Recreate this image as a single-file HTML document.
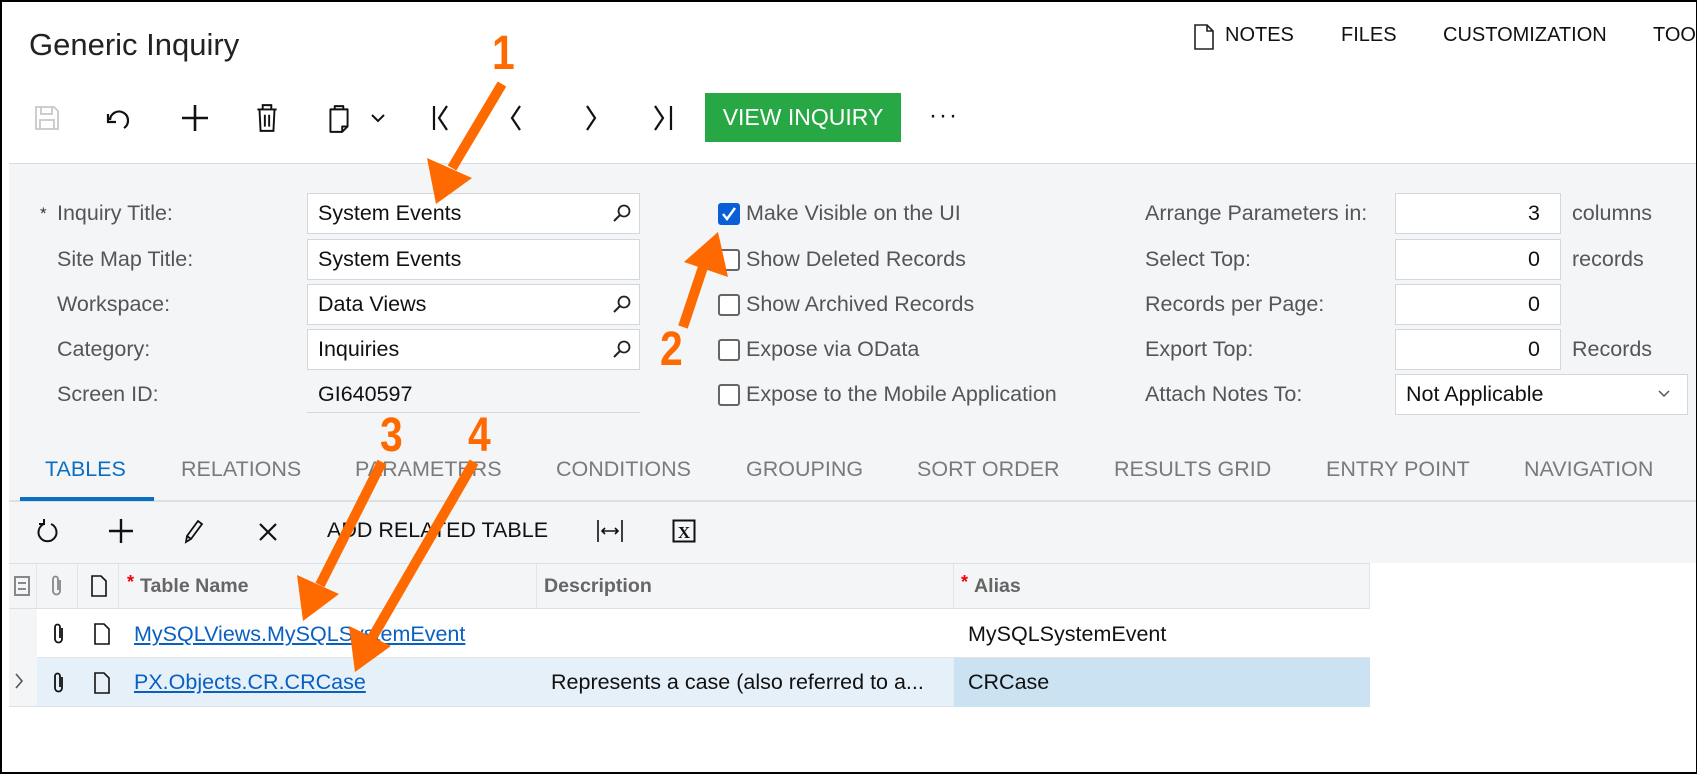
<!DOCTYPE html>
<html><head><meta charset="utf-8"><style>
*{margin:0;padding:0;box-sizing:border-box}
body{width:1697px;height:774px;position:relative;overflow:hidden;background:#fff;font-family:"Liberation Sans",Arial,sans-serif;color:#222}
.a{position:absolute;white-space:nowrap}
.frame{position:absolute;left:0;top:0;width:1697px;height:774px;border:2px solid #000;border-right-width:1px;z-index:50;pointer-events:none}
.lbl{font-size:21.5px;color:#555}
.inp{position:absolute;background:#fff;border:1px solid #d3d6da;height:41px;font-size:21.5px;color:#111;padding:0 10px;line-height:39px}
.num{text-align:right;padding-right:20px}
.tab{font-size:21.5px;color:#7a7a7a;top:457px}
.cb{position:absolute;left:718px;width:22px;height:22px;border:2px solid #666;border-radius:3px;background:#fff}
.cbt{left:746px;font-size:21.5px;color:#555}
.tm{font-size:20px;color:#111;top:24px}
svg{position:absolute}
.hd{font-size:19.6px;color:#666;font-weight:bold;top:575px}
.cell{position:absolute;border-right:1px solid #e2e4e7}
.lnk{color:#0a5fc2;text-decoration:underline;font-size:21.5px}
.num2{position:absolute;color:#ff6a00;font-weight:bold;font-size:48px;z-index:40;transform:scaleX(0.85);transform-origin:left}
</style></head><body>
<div class="frame"></div>
<div class="a" style="left:29px;top:27px;font-size:31px;color:#222">Generic Inquiry</div>
<svg style="left:1193px;top:24px" width="22" height="26" viewBox="0 0 22 26"><path d="M2 1h12l6 6v18H2z M14 1v6h6" fill="none" stroke="#222" stroke-width="1.6"/></svg>
<div class="a tm" style="left:1225px">NOTES</div>
<div class="a tm" style="left:1341px">FILES</div>
<div class="a tm" style="left:1443px">CUSTOMIZATION</div>
<div class="a tm" style="left:1653px">TOO</div>

<!-- toolbar -->
<svg style="left:34px;top:105px" width="26" height="26" viewBox="0 0 26 26"><path d="M2 2h18l4 4v18H2z M7 2v7h11V2 M6 24v-9h14v9" fill="none" stroke="#c8c8c8" stroke-width="1.8"/></svg>
<svg style="left:106px;top:106px" width="28" height="24" viewBox="0 0 28 24"><path d="M4 14 A9 9 0 1 1 18 22 M2 8v8h8" fill="none" stroke="#111" stroke-width="2.2"/></svg>
<svg style="left:181px;top:104px" width="28" height="28"><path d="M14 1v26M1 14h26" stroke="#111" stroke-width="2.6"/></svg>
<svg style="left:255px;top:103px" width="24" height="30" viewBox="0 0 22 28"><path d="M2 6h18M7 6V2h8v4M4 6l1 20h12l1-20M9 11v11M13 11v11" fill="none" stroke="#111" stroke-width="1.8"/></svg>
<svg style="left:327px;top:104px" width="24" height="30" viewBox="0 0 22 28"><path d="M7 5V2h8v3 M3 5h16v16l-5 5H3z M14 26v-5h5" fill="none" stroke="#111" stroke-width="1.8" stroke-linejoin="round"/></svg>
<svg style="left:371px;top:113px" width="14" height="10"><path d="M1 2l6 6 6-6" fill="none" stroke="#111" stroke-width="2"/></svg>
<svg style="left:432px;top:104px" width="22" height="28"><path d="M2 2v24M15 2l-8 12 8 12" fill="none" stroke="#111" stroke-width="2.2"/></svg>
<svg style="left:509px;top:104px" width="14" height="28"><path d="M11 2l-8 12 8 12" fill="none" stroke="#111" stroke-width="2.2"/></svg>
<svg style="left:584px;top:104px" width="14" height="28"><path d="M3 2l8 12-8 12" fill="none" stroke="#111" stroke-width="2.2"/></svg>
<svg style="left:652px;top:104px" width="22" height="28"><path d="M3 2l8 12-8 12M19 2v24" fill="none" stroke="#111" stroke-width="2.2"/></svg>
<div class="a" style="left:705px;top:93px;width:196px;height:49px;background:#28a745;color:#fff;font-size:23px;line-height:49px;text-align:center">VIEW INQUIRY</div>
<div class="a" style="left:929px;top:102px;font-size:24px;color:#111;letter-spacing:2px">···</div>

<!-- gray panel -->
<div class="a" style="left:9px;top:163px;width:1688px;height:400px;background:#f4f5f7;border-top:1px solid #dcdcdc"></div>

<div class="a" style="left:40px;top:204px;font-size:17px;color:#333">*</div>
<div class="a lbl" style="left:57px;top:201px">Inquiry Title:</div>
<div class="a lbl" style="left:57px;top:247px">Site Map Title:</div>
<div class="a lbl" style="left:57px;top:292px">Workspace:</div>
<div class="a lbl" style="left:57px;top:337px">Category:</div>
<div class="a lbl" style="left:57px;top:382px">Screen ID:</div>
<div class="inp" style="left:307px;top:193px;width:333px">System Events</div>
<div class="inp" style="left:307px;top:239px;width:333px">System Events</div>
<div class="inp" style="left:307px;top:284px;width:333px">Data Views</div>
<div class="inp" style="left:307px;top:329px;width:333px">Inquiries</div>
<div class="a" style="left:318px;top:382px;font-size:21.5px;color:#111">GI640597</div>
<div class="a" style="left:307px;top:412px;width:333px;height:1px;background:#d3d6da"></div>
<svg style="left:612px;top:203px" width="20" height="20"><circle cx="12" cy="8" r="5.5" fill="none" stroke="#222" stroke-width="1.8"/><path d="M8 12l-6 6" stroke="#222" stroke-width="2"/></svg>
<svg style="left:612px;top:294px" width="20" height="20"><circle cx="12" cy="8" r="5.5" fill="none" stroke="#222" stroke-width="1.8"/><path d="M8 12l-6 6" stroke="#222" stroke-width="2"/></svg>
<svg style="left:612px;top:339px" width="20" height="20"><circle cx="12" cy="8" r="5.5" fill="none" stroke="#222" stroke-width="1.8"/><path d="M8 12l-6 6" stroke="#222" stroke-width="2"/></svg>

<div class="cb" style="top:203px;background:#0a5fd6;border-color:#0a5fd6"></div>
<svg style="left:720px;top:205px" width="18" height="18"><path d="M3 9l4 5 8-11" fill="none" stroke="#fff" stroke-width="2.4"/></svg>
<div class="cb" style="top:249px"></div>
<div class="cb" style="top:294px"></div>
<div class="cb" style="top:339px"></div>
<div class="cb" style="top:384px"></div>
<div class="a cbt" style="top:201px">Make Visible on the UI</div>
<div class="a cbt" style="top:247px">Show Deleted Records</div>
<div class="a cbt" style="top:292px">Show Archived Records</div>
<div class="a cbt" style="top:337px">Expose via OData</div>
<div class="a cbt" style="top:382px">Expose to the Mobile Application</div>

<div class="a lbl" style="left:1145px;top:201px">Arrange Parameters in:</div>
<div class="a lbl" style="left:1145px;top:247px">Select Top:</div>
<div class="a lbl" style="left:1145px;top:292px">Records per Page:</div>
<div class="a lbl" style="left:1145px;top:337px">Export Top:</div>
<div class="a lbl" style="left:1145px;top:382px">Attach Notes To:</div>
<div class="inp num" style="left:1395px;top:193px;width:166px">3</div>
<div class="inp num" style="left:1395px;top:239px;width:166px">0</div>
<div class="inp num" style="left:1395px;top:284px;width:166px">0</div>
<div class="inp num" style="left:1395px;top:329px;width:166px">0</div>
<div class="inp" style="left:1395px;top:374px;width:293px">Not Applicable</div>
<svg style="left:1657px;top:389px" width="14" height="10"><path d="M2 2l5 5 5-5" fill="none" stroke="#555" stroke-width="1.5"/></svg>
<div class="a lbl" style="left:1572px;top:201px">columns</div>
<div class="a lbl" style="left:1572px;top:247px">records</div>
<div class="a lbl" style="left:1572px;top:337px">Records</div>

<!-- tabs -->
<div class="a tab" style="left:45px;color:#0a6fc2">TABLES</div>
<div class="a tab" style="left:181px">RELATIONS</div>
<div class="a tab" style="left:355px">PARAMETERS</div>
<div class="a tab" style="left:556px">CONDITIONS</div>
<div class="a tab" style="left:746px">GROUPING</div>
<div class="a tab" style="left:917px">SORT ORDER</div>
<div class="a tab" style="left:1114px">RESULTS GRID</div>
<div class="a tab" style="left:1326px">ENTRY POINT</div>
<div class="a tab" style="left:1524px">NAVIGATION</div>
<div class="a" style="left:9px;top:500px;width:1688px;height:2px;background:#dcdfe3"></div>
<div class="a" style="left:20px;top:497px;width:134px;height:4px;background:#0a6fc2"></div>

<!-- grid toolbar -->
<svg style="left:36px;top:518px" width="24" height="28" viewBox="0 0 24 28"><path d="M8 6A9 9 0 1 0 15 6 M8 1v5h-5" fill="none" stroke="#111" stroke-width="2"/></svg>
<svg style="left:108px;top:518px" width="26" height="26"><path d="M13 1v24M1 13h24" stroke="#111" stroke-width="2.4"/></svg>
<svg style="left:182px;top:518px" width="22" height="26"><path d="M4 24l1-6L16 3l4 3L9 21z M5 18l4 3" fill="none" stroke="#111" stroke-width="1.8"/></svg>
<svg style="left:258px;top:522px" width="20" height="20"><path d="M2 2l16 16M18 2L2 18" stroke="#111" stroke-width="2.2"/></svg>
<div class="a" style="left:327px;top:518px;font-size:21.5px;color:#111">ADD RELATED TABLE</div>
<svg style="left:596px;top:518px" width="28" height="26"><path d="M2 2v22M26 2v22M6 13h16M9 10l-3 3 3 3M19 10l3 3-3 3" fill="none" stroke="#111" stroke-width="1.6"/></svg>
<svg style="left:672px;top:519px" width="24" height="24"><rect x="1.5" y="1.5" width="21" height="21" fill="none" stroke="#111" stroke-width="2"/><text x="12" y="19" text-anchor="middle" font-family="Liberation Serif" font-weight="bold" font-size="17" fill="#111">X</text></svg>

<!-- grid -->
<div class="a" style="left:9px;top:563px;width:1361px;height:46px;background:#f4f5f7;border-top:1px solid #dcdfe3;border-bottom:1px solid #dcdfe3"></div>
<div class="a" style="left:9px;top:609px;width:1361px;height:49px;background:#fff;border-bottom:1px solid #e2e4e7"></div>
<div class="a" style="left:9px;top:658px;width:28px;height:49px;background:#f4f5f7;border-bottom:1px solid #dcdfe3"></div>
<div class="a" style="left:37px;top:658px;width:1333px;height:49px;background:#e5f0f8;border-bottom:1px solid #dcdfe3"></div>
<div class="a" style="left:954px;top:658px;width:416px;height:49px;background:#cbe2f3"></div>
<div class="a" style="left:9px;top:609px;width:28px;height:49px;background:#f4f5f7"></div>
<div class="cell" style="left:9px;top:564px;width:28px;height:45px"></div>
<div class="cell" style="left:37px;top:564px;width:41px;height:45px"></div>
<div class="cell" style="left:78px;top:564px;width:41px;height:45px"></div>
<div class="cell" style="left:119px;top:564px;width:418px;height:45px"></div>
<div class="cell" style="left:537px;top:564px;width:417px;height:45px"></div>
<div class="cell" style="left:954px;top:564px;width:416px;height:45px"></div>
<svg style="left:13px;top:575px" width="18" height="22"><rect x="2" y="2" width="14" height="18" fill="none" stroke="#888" stroke-width="2"/><path d="M5 8h8M5 14h8" stroke="#888" stroke-width="2"/></svg>
<svg style="left:50px;top:574px" width="14" height="24" viewBox="0 0 14 24"><path d="M10 6v11a3.5 3.5 0 0 1-7 0V5a2.5 2.5 0 0 1 5 0v11" fill="none" stroke="#888" stroke-width="1.8"/></svg>
<svg style="left:90px;top:575px" width="18" height="22"><path d="M2 1h9l5 5v15H2z" fill="none" stroke="#111" stroke-width="1.6"/></svg>
<div class="a" style="left:127px;top:572px;color:#e00;font-size:18px;font-weight:bold">*</div>
<div class="a hd" style="left:140px">Table Name</div>
<div class="a hd" style="left:544px">Description</div>
<div class="a" style="left:961px;top:572px;color:#e00;font-size:18px;font-weight:bold">*</div>
<div class="a hd" style="left:974px">Alias</div>

<svg style="left:52px;top:622px" width="14" height="24" viewBox="0 0 14 24"><path d="M10 6v11a3.5 3.5 0 0 1-7 0V5a2.5 2.5 0 0 1 5 0v11" fill="none" stroke="#111" stroke-width="1.8"/></svg>
<svg style="left:93px;top:623px" width="18" height="22"><path d="M2 1h9l5 5v15H2z" fill="none" stroke="#111" stroke-width="1.6"/></svg>
<div class="a lnk" style="left:134px;top:622px">MySQLViews.MySQLSystemEvent</div>
<div class="a" style="left:968px;top:622px;font-size:21.5px;color:#111">MySQLSystemEvent</div>

<svg style="left:14px;top:672px" width="10" height="18"><path d="M2 2l6 7-6 7" fill="none" stroke="#555" stroke-width="1.6"/></svg>
<svg style="left:52px;top:671px" width="14" height="24" viewBox="0 0 14 24"><path d="M10 6v11a3.5 3.5 0 0 1-7 0V5a2.5 2.5 0 0 1 5 0v11" fill="none" stroke="#111" stroke-width="1.8"/></svg>
<svg style="left:93px;top:672px" width="18" height="22"><path d="M2 1h9l5 5v15H2z" fill="none" stroke="#111" stroke-width="1.6"/></svg>
<div class="a lnk" style="left:134px;top:670px">PX.Objects.CR.CRCase</div>
<div class="a" style="left:551px;top:670px;font-size:21.5px;color:#111">Represents a case (also referred to a...</div>
<div class="a" style="left:968px;top:670px;font-size:21.5px;color:#111">CRCase</div>

<!-- annotations -->
<div class="num2" style="left:492px;top:26px">1</div>
<div class="num2" style="left:660px;top:322px">2</div>
<div class="num2" style="left:380px;top:408px">3</div>
<div class="num2" style="left:468px;top:408px">4</div>
<svg style="left:0;top:0;z-index:39" width="1697" height="774">
<g stroke="#ff6a00" stroke-width="10" fill="#ff6a00">
<path d="M502 84L452 168"/><polygon points="436,204 427,158 472,178" stroke="none"/>
<path d="M683 327L704 264"/><polygon points="718,232 728,277 684,262" stroke="none"/>
<path d="M382 462L320 585"/><polygon points="303,621 297,575 339,594" stroke="none"/>
<path d="M474 462L372 638"/><polygon points="355,672 349,626 391,646" stroke="none"/>
</g></svg>
</body></html>
